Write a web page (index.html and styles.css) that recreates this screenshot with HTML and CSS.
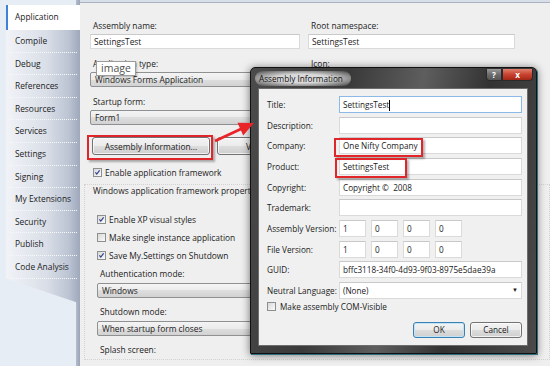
FILE: index.html
```html
<!DOCTYPE html>
<html>
<head><meta charset="utf-8"/>
<title>SettingsTest - Application</title>
<link rel="stylesheet" href="styles.css">
</head>
<body>
<div class="window">
  <nav class="tabs">
    <ul class="tablist">
      <li class="tab active">Application</li>
      <li class="tab">Compile</li>
      <li class="tab">Debug</li>
      <li class="tab">References</li>
      <li class="tab">Resources</li>
      <li class="tab">Services</li>
      <li class="tab">Settings</li>
      <li class="tab">Signing</li>
      <li class="tab">My Extensions</li>
      <li class="tab">Security</li>
      <li class="tab">Publish</li>
      <li class="tab">Code Analysis</li>
    </ul>
  </nav>

  <main class="panel">
    <div class="fields">
      <div class="field"><label>Assembly name:</label><div class="input">SettingsTest</div></div>
      <div class="field"><label>Root namespace:</label><div class="input">SettingsTest</div></div>
      <div class="field"><label>Application type:</label><div class="combo">Windows Forms Application</div></div>
      <div class="field"><label>Icon:</label><div class="combo"></div></div>
      <div class="field"><label>Startup form:</label><div class="combo">Form1</div></div>
    </div>

    <div class="buttons">
      <span class="mark"><button class="btn wide">Assembly Information...</button></span>
      <button class="btn events">View Application Events</button>
    </div>

    <div class="check first">
      <span class="cb"><svg viewBox="0 0 9 9"><path d="M1.8 4.4 L3.6 6.6 L7.2 1.8"/></svg></span>
      Enable application framework
    </div>

    <div class="group">
      <div class="group-title">Windows application framework properties</div>
      <div class="group-body">
        <div class="check">
          <span class="cb"><svg viewBox="0 0 9 9"><path d="M1.8 4.4 L3.6 6.6 L7.2 1.8"/></svg></span>
          Enable XP visual styles
        </div>
        <div class="check">
          <span class="cb"></span>
          Make single instance application
        </div>
        <div class="check">
          <span class="cb"><svg viewBox="0 0 9 9"><path d="M1.8 4.4 L3.6 6.6 L7.2 1.8"/></svg></span>
          Save My.Settings on Shutdown
        </div>
        <label class="lbl auth">Authentication mode:</label>
        <div class="combo">Windows</div>
        <label class="lbl">Shutdown mode:</label>
        <div class="combo">When startup form closes</div>
        <label class="lbl splash">Splash screen:</label>
      </div>
    </div>
  </main>
</div>

<div class="tooltip">image</div>

<div class="dialog">
  <div class="titlebar">
    <span class="caption">Assembly Information</span>
    <div class="caption-buttons"><span class="help">?</span><span class="close">x</span></div>
  </div>
  <div class="client">
    <div class="form">
      <label>Title:</label><div class="input focus">SettingsTest<span class="caret"></span></div>
      <label>Description:</label><div class="input"></div>
      <label>Company:</label><div class="input">One Nifty Company</div>
      <label>Product:</label><div class="input">SettingsTest</div>
      <label>Copyright:</label><div class="input">Copyright ©&nbsp; 2008</div>
      <label>Trademark:</label><div class="input"></div>
      <label>Assembly Version:</label>
      <div class="version"><div class="input">1</div><div class="input">0</div><div class="input">0</div><div class="input">0</div></div>
      <label>File Version:</label>
      <div class="version"><div class="input">1</div><div class="input">0</div><div class="input">0</div><div class="input">0</div></div>
      <label>GUID:</label><div class="input">bffc3118-34f0-4d93-9f03-8975e5dae39a</div>
      <label>Neutral Language:</label><div class="input select">(None)<span class="drop">&#9660;</span></div>
    </div>
    <div class="check com"><span class="cb"></span>Make assembly COM-Visible</div>
    <div class="actions"><button class="btn default">OK</button><button class="btn">Cancel</button></div>
  </div>
  <div class="callout company"></div>
  <div class="callout product"></div>
</div>

<svg class="arrow" width="550" height="366">
  <line x1="215" y1="141" x2="242" y2="128.5"/>
  <polygon points="254,123 237.5,122.8 243.2,135.6"/>
</svg>
</body>
</html>
```

FILE: styles.css
```css
* { box-sizing: border-box; }

body {
    margin: 0;
    width: 550px;
    height: 366px;
    overflow: hidden;
    position: relative;
    background: #d9dfe8;
    font-family: "Open Sans", "Noto Sans", sans-serif;
    font-size: 8.4px;
    color: #1b1b1b;
}

.window { display: flex; height: 366px; }

/* left tab strip */
.tabs {
    width: 80px;
    flex: none;
    background: linear-gradient(to right, #e7edf5 76px, #b4bccb 76px, #9aa4b7);
}

.tablist {
    list-style: none;
    margin: 5px 0 0 6px;
    padding: 0 0 25px;
    background: linear-gradient(to right, #f1f3f7, #d9dee7 55%, #bcc4d3 85%, #9ea8ba);
    clip-path: polygon(0 0, 100% 0, 100% 100%, 0 calc(100% - 25px));
}

.tab {
    height: 22.6px;
    line-height: 21px;
    margin: 0 3px 0 4px;
    padding-left: 5px;
    border-bottom: 1px dotted #f7f8fb;
}

.tab.active {
    height: 25px;
    line-height: 24px;
    margin: 0;
    padding-left: 7px;
    background: #fff;
    border-left: 2px solid #3f80d8;
    border-bottom: 0;
}

/* main property page */
.panel {
    flex: 1;
    margin-top: 2px;
    border-top: 1px solid #aab3c2;
    background: #efefef;
    padding: 17px 0 0 10px;
}

.fields {
    display: grid;
    grid-template-columns: 210px 207px;
    column-gap: 8px;
    row-gap: 9px;
}

.field label, .lbl {
    display: block;
    height: 12px;
    line-height: 12px;
    padding-left: 3px;
    margin-bottom: 2px;
}

.input {
    height: 15px;
    line-height: 14px;
    padding-left: 3px;
    background: #fff;
    border: 1px solid #dadada;
    border-top-color: #c9c9c9;
    white-space: nowrap;
    overflow: hidden;
}

.combo {
    height: 15px;
    line-height: 13px;
    padding-left: 4px;
    border: 1px solid #8f9091;
    border-radius: 2px;
    background: linear-gradient(#f4f4f4, #ebebeb 50%, #dedede 50%, #d2d2d2);
    white-space: nowrap;
}

.btn {
    font: inherit;
    color: inherit;
    height: 18px;
    padding: 0;
    border: 1px solid #727272;
    border-radius: 3px;
    background: linear-gradient(#f3f3f3, #ebebeb 50%, #dddddd 50%, #cfcfcf);
    box-shadow: inset 0 0 0 1px rgba(255,255,255,.7);
}

.buttons {
    display: flex;
    gap: 7px;
    margin: 12px 0 0 2px;
}

.btn.wide { width: 118px; }
.btn.events { width: 150px; }

/* red annotation frames */
.mark { position: relative; display: block; }
.mark::after {
    content: "";
    position: absolute;
    top: -2px; left: -5px; right: -3px; bottom: -5px;
    border: 2px solid #e1262b;
    box-shadow: 2px 2px 2px rgba(0,0,0,.3);
}

.check {
    display: flex;
    align-items: center;
    gap: 3px;
    height: 12px;
    margin-bottom: 6px;
    white-space: nowrap;
}

.check.first { margin: 11px 0 0 3px; }

.cb {
    width: 9px;
    height: 9px;
    flex: none;
    border: 1px solid #8e8f8f;
    background: linear-gradient(135deg, #d9d9d9, #fafafa);
}

.cb svg { display: block; width: 7px; height: 7px; }
.cb path { fill: none; stroke: #2d3f8f; stroke-width: 1.5; }

.group {
    margin: 6px 0 0 -6px;
    height: 176px;
    border: 1px dotted #d2d2d2;
    padding-left: 8px;
}

.group-title { height: 12px; line-height: 12px; white-space: nowrap; }

.group-body { padding: 16px 0 0 4px; }

.group-body .combo { width: 200px; }
.lbl.auth { margin-top: 7px; margin-bottom: 3px; }
.group-body .combo + .lbl { margin-top: 8px; margin-bottom: 3px; }
.lbl.splash { margin-top: 9px; }

.tooltip {
    position: absolute;
    left: 96px;
    top: 61px;
    width: 40px;
    height: 15px;
    line-height: 13px;
    text-align: center;
    font-size: 10.5px;
    color: #505050;
    background: #fff;
    border: 1px solid #9c9c9c;
    box-shadow: 1px 1px 2px rgba(0,0,0,.25);
}

/* Assembly Information dialog */
.dialog {
    position: absolute;
    left: 250px;
    top: 67px;
    width: 287px;
    height: 287px;
    display: flex;
    flex-direction: column;
    padding: 0 8px 7px 7px;
    font-size: 8.2px;
    border: 1px solid #111;
    border-radius: 5px 5px 0 0;
    background: linear-gradient(100deg, #4b4b4b, #3a3a3a 30%, #5e5e5e 52%, #333 72%, #4a4a4a);
    box-shadow: 1px 1px 0 #2d6f7d, 0 1px 8px rgba(0,0,0,.55);
}

.titlebar {
    height: 20px;
    display: flex;
    align-items: flex-start;
    justify-content: space-between;
}

.caption {
    margin: 3px 0 0 -3px;
    padding: 2px 8px 2px 4px;
    color: #111;
    background: radial-gradient(ellipse at center, rgba(255,255,255,.8) 40%, rgba(255,255,255,.35) 75%, rgba(255,255,255,0) 100%);
    border-radius: 8px;
}

.caption-buttons { display: flex; margin: 1px -5px 0 0; }

.caption-buttons span {
    height: 12px;
    line-height: 11px;
    text-align: center;
    color: #fff;
    font-weight: bold;
    border: 1px solid #2a2a2a;
    border-top: 0;
}

.help {
    width: 16px;
    background: linear-gradient(#9a9a9a, #6c6c6c 50%, #555);
    border-radius: 0 0 0 4px;
}

.close {
    width: 31px;
    background: linear-gradient(#e0806f, #c8432f 50%, #a32616);
    border-radius: 0 0 4px 0;
}

.client {
    flex: 1;
    background: #f0f0f0;
    border: 1px solid #6d6d6d;
    padding: 7px 5px 0 8px;
}

.form {
    display: grid;
    grid-template-columns: 72px 1fr;
    grid-auto-rows: 17px;
    row-gap: 3.67px;
    align-items: center;
}

.form label { white-space: nowrap; }
.form .input { height: 17px; line-height: 15px; }
.form .input.focus { border-color: #8cb9e6; }

.caret {
    display: inline-block;
    width: 1px;
    height: 11px;
    background: #000;
    vertical-align: middle;
}

.version { display: flex; gap: 5px; }
.version .input { width: 27px; }

.select { position: relative; }
.drop {
    position: absolute;
    right: 3px;
    top: 0;
    font-size: 6px;
}

.check.com { margin: 2px 0 0; gap: 4px; }

.actions {
    display: flex;
    justify-content: flex-end;
    gap: 5px;
    margin-top: 9px;
}

.actions .btn { width: 52px; height: 16px; }
.btn.default { border-color: #3c7fb1; box-shadow: inset 0 0 0 1px #bfe4f9; }

.callout {
    position: absolute;
    border: 2px solid #e1262b;
    box-shadow: 2px 2px 2px rgba(0,0,0,.3);
}

.callout.company { left: 83px; top: 70px; width: 89px; height: 19px; }
.callout.product { left: 84px; top: 90px; width: 72px; height: 20px; }

.arrow {
    position: absolute;
    left: 0;
    top: 0;
    pointer-events: none;
}

.arrow line { stroke: #e8262a; stroke-width: 3; }
.arrow polygon { fill: #e8262a; }
```
